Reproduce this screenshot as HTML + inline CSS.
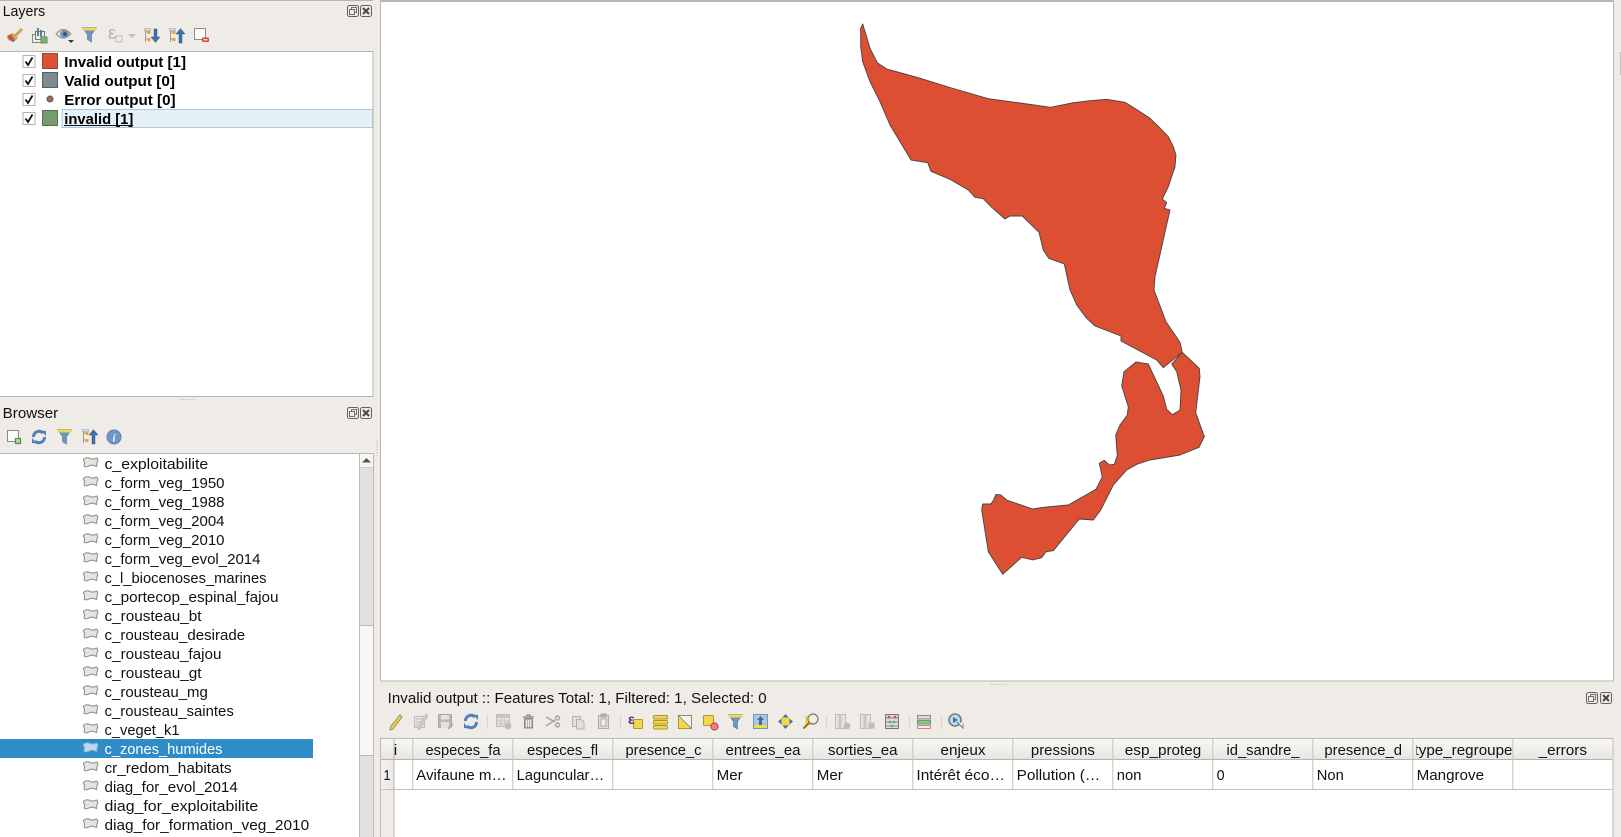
<!DOCTYPE html>
<html><head><meta charset="utf-8"><title>QGIS</title>
<style>
html,body{margin:0;padding:0;background:#efebe7;overflow:hidden}
svg{display:block}
text{font-family:"Liberation Sans",sans-serif;font-size:15px;fill:#111}
.b{font-weight:bold;font-size:14.5px;fill:#000}
.c{text-anchor:start}
</style></head><body>
<svg width="1621" height="837" viewBox="0 0 1621 837" xmlns="http://www.w3.org/2000/svg">
<defs>
<g id="poly"><path d="M1.5,2.5C3,0.5 6,0.5 8,1.5C10.5,2.5 13,2 14.5,1C16,2 16,4 15,5.5C14.5,7 15,8.5 14.5,9.5C12,8 10,7.8 8,8.5C6,9.5 4,10.5 2.5,9.5C1.5,8.5 3,6.5 2.5,5C2,4 1,3.5 1.5,2.5Z" fill="#e6e4e1" stroke="#929290" stroke-width="1.1"/></g>
<g id="funnel"><path d="M0.5,0.5H14.5L9.5,7.5V15L5.5,12.5V7.5Z" fill="#6f97bd" stroke="#5d7f9e" stroke-width=".7"/><rect x="0.5" y="0.5" width="14" height="3" fill="#f0d75a"/></g>
<g id="dock"><rect x=".5" y=".5" width="11" height="11" rx="2" fill="none" stroke="#66635f"/><rect x="4.5" y="2.5" width="5" height="5" fill="none" stroke="#66635f" stroke-width=".9"/><rect x="2.5" y="4.5" width="5" height="5" fill="#efebe7" stroke="#66635f" stroke-width=".9"/></g>
<g id="close"><rect x=".5" y=".5" width="11" height="11" rx="2" fill="none" stroke="#66635f"/><path d="M3,3L9,9M9,3L3,9" stroke="#4a4845" stroke-width="2"/></g>
<g id="cb"><rect x=".5" y=".5" width="12" height="12" fill="#fff" stroke="#b5b2ad"/><path d="M3,6.5L5.5,10L10,2.5" fill="none" stroke="#111" stroke-width="1.8"/></g>
<g id="tree"><path d="M1.5,1V14M1.5,4H6M1.5,11H6" stroke="#9a9a96" fill="none"/><rect x=".5" y=".5" width="6" height="2" fill="#ddd" stroke="#999" stroke-width=".5"/><rect x="3.5" y="3" width="3" height="3" fill="#f0a030"/><rect x="3.5" y="10" width="3" height="3" fill="#f0a030"/></g>
<clipPath id="cr"><rect x="1416.5" y="739" width="95" height="20"/></clipPath>
</defs>

<rect width="1621" height="837" fill="#efebe7"/>
<rect x="0" y="0" width="373" height="1" fill="#b9b5b0"/>

<!-- Layers dock -->
<text x="2.7" y="16" textLength="42.5" lengthAdjust="spacingAndGlyphs">Layers</text>
<use href="#dock" x="347" y="5"/><use href="#close" x="360" y="5"/>

<!-- layers toolbar -->
<g transform="translate(7,28)"><path d="M15,1L8,8" stroke="#c9a45c" stroke-width="3"/><path d="M0,8L6,5L11,10L6,14L1,12Z" fill="#d9a640"/><path d="M0,8L4,6L7,11L3,12Z" fill="#c8503c"/><path d="M3,12L7,10L8,13L6,14Z" fill="#7a6aa8"/></g>
<g transform="translate(32,28)" fill="none"><rect x=".5" y="6.5" width="9" height="8" stroke="#888" fill="#efebe7"/><rect x="3.5" y="3.5" width="9" height="8" stroke="#777" fill="#efebe7"/><path d="M6,0V8M9,2V9" stroke="#5d7f9e" stroke-width="2"/><rect x="9" y="9" width="6" height="6" fill="#7fb07a" stroke="#5c8f58"/></g>
<g transform="translate(56,28)"><path d="M0,6Q7,-3 15,6Q7,14 0,6Z" fill="#dcdcda" stroke="#8e8e8a"/><circle cx="8.5" cy="6" r="4.3" fill="#6f97bd"/><circle cx="9" cy="6" r="1.8" fill="#2f4f6d"/><path d="M12,12H18L15,15Z" fill="#333"/></g>
<use href="#funnel" x="82" y="27"/>
<g transform="translate(108,28)"><text x="0" y="11" style="font-size:18px;fill:#b2b2ae">ε</text><rect x="8" y="8" width="6" height="6" fill="none" stroke="#bdbdb9"/><path d="M20,6H28L24,10Z" fill="#c4c2be"/></g>
<g transform="translate(144,28)"><use href="#tree"/><path d="M10,1V9H7L11.5,14.5L16,9H13V1Z" fill="#3f73a8" stroke="#2f5a85" stroke-width=".5"/></g>
<g transform="translate(169,28)"><use href="#tree"/><path d="M10,15V6H7L11.5,.5L16,6H13V15Z" fill="#3f73a8" stroke="#2f5a85" stroke-width=".5"/></g>
<g transform="translate(194,28)"><rect x=".5" y=".5" width="11" height="11" fill="#fbfbfa" stroke="#8a8a86"/><rect x="8" y="9.5" width="7" height="4.5" rx="1" fill="#d8474a"/><rect x="9.5" y="11.2" width="4" height="1.2" fill="#fff"/></g>

<!-- layers tree -->
<rect x="-1" y="51.5" width="374" height="345" fill="#fff" stroke="#b9b5b0"/>
<use href="#cb" x="22.5" y="55"/><use href="#cb" x="22.5" y="74"/><use href="#cb" x="22.5" y="93"/><use href="#cb" x="22.5" y="112"/>
<rect x="42.5" y="53.5" width="15" height="15" fill="#df4f33" stroke="#7a5045"/>
<rect x="42.5" y="72.5" width="15" height="15" fill="#7e8c92" stroke="#555f63"/>
<circle cx="50" cy="99" r="3" fill="#996a52" stroke="#6a5a50"/>
<rect x="42.5" y="110.5" width="15" height="15" fill="#739c70" stroke="#55704f"/>
<rect x="62" y="109.5" width="310.5" height="18" fill="#e6f0f7" stroke="#a9c8df"/>
<text class="b" x="64.3" y="67" textLength="121.7" lengthAdjust="spacingAndGlyphs">Invalid output [1]</text>
<text class="b" x="64.3" y="86" textLength="110.7" lengthAdjust="spacingAndGlyphs">Valid output [0]</text>
<text class="b" x="64.3" y="105" textLength="111.3" lengthAdjust="spacingAndGlyphs">Error output [0]</text>
<text class="b" x="64.3" y="124" textLength="69" lengthAdjust="spacingAndGlyphs">invalid [1]</text>
<rect x="64" y="125" width="69" height="1" fill="#111"/>

<line x1="179" y1="399.5" x2="195" y2="399.5" stroke="#c4c0bb" stroke-dasharray="1.5 1.5"/>

<!-- Browser dock -->
<text x="2.7" y="418" textLength="55.5" lengthAdjust="spacingAndGlyphs">Browser</text>
<use href="#dock" x="347" y="407"/><use href="#close" x="360" y="407"/>
<g transform="translate(7,430)"><rect x=".5" y=".5" width="11" height="11" fill="#fbfbfa" stroke="#8a8a86"/><rect x="8.5" y="8.5" width="5" height="5" fill="#b5d6a8" stroke="#4f8f4a" stroke-width="1.2"/></g>
<g transform="translate(32,430)" fill="none" stroke="#4a82b8" stroke-width="3"><path d="M1.5,7A5.5,5.5 0 0 1 11,3"/><path d="M12.5,7A5.5,5.5 0 0 1 3,11"/><path d="M9,0.5L14,1V6Z" fill="#4a82b8" stroke="none"/><path d="M5,13.5L0,13V8Z" fill="#4a82b8" stroke="none"/></g>
<use href="#funnel" x="57" y="429"/>
<g transform="translate(82,429)"><use href="#tree"/><path d="M10,15V6H7L11.5,.5L16,6H13V15Z" fill="#3f73a8" stroke="#2f5a85" stroke-width=".5"/></g>
<circle cx="114" cy="437" r="7" fill="#6f97c6" stroke="#5c80ab"/><text x="112.5" y="441.5" style="font-size:11px;font-weight:bold;font-style:italic;fill:#fff;font-family:'Liberation Serif',serif">i</text>
<line x1="377" y1="440" x2="377" y2="457" stroke="#c4c0bb" stroke-dasharray="1.5 1.5"/>

<!-- browser list -->
<rect x="-1" y="453.5" width="374.5" height="390" fill="#fff" stroke="#b9b5b0"/>
<rect x="0" y="739" width="313" height="19" fill="#308cc6"/>
<g>
<use href="#poly" x="82" y="457"/><use href="#poly" x="82" y="476"/><use href="#poly" x="82" y="495"/><use href="#poly" x="82" y="514"/><use href="#poly" x="82" y="533"/><use href="#poly" x="82" y="552"/><use href="#poly" x="82" y="571"/><use href="#poly" x="82" y="590"/><use href="#poly" x="82" y="609"/><use href="#poly" x="82" y="628"/><use href="#poly" x="82" y="647"/><use href="#poly" x="82" y="666"/><use href="#poly" x="82" y="685"/><use href="#poly" x="82" y="704"/><use href="#poly" x="82" y="723"/>
<path transform="translate(82,742)" d="M1.5,2.5C3,0.5 6,0.5 8,1.5C10.5,2.5 13,2 14.5,1C16,2 16,4 15,5.5C14.5,7 15,8.5 14.5,9.5C12,8 10,7.8 8,8.5C6,9.5 4,10.5 2.5,9.5C1.5,8.5 3,6.5 2.5,5C2,4 1,3.5 1.5,2.5Z" fill="#bcd9ec" stroke="#8db8d6"/>
<use href="#poly" x="82" y="761"/><use href="#poly" x="82" y="780"/><use href="#poly" x="82" y="799"/><use href="#poly" x="82" y="818"/>
</g>
<g>
<text x="104.5" y="469" textLength="103.7" lengthAdjust="spacingAndGlyphs">c_exploitabilite</text>
<text x="104.5" y="488" textLength="120" lengthAdjust="spacingAndGlyphs">c_form_veg_1950</text>
<text x="104.5" y="507" textLength="120" lengthAdjust="spacingAndGlyphs">c_form_veg_1988</text>
<text x="104.5" y="526" textLength="120" lengthAdjust="spacingAndGlyphs">c_form_veg_2004</text>
<text x="104.5" y="545" textLength="120" lengthAdjust="spacingAndGlyphs">c_form_veg_2010</text>
<text x="104.5" y="564" textLength="156" lengthAdjust="spacingAndGlyphs">c_form_veg_evol_2014</text>
<text x="104.5" y="583" textLength="162" lengthAdjust="spacingAndGlyphs">c_l_biocenoses_marines</text>
<text x="104.5" y="602" textLength="174" lengthAdjust="spacingAndGlyphs">c_portecop_espinal_fajou</text>
<text x="104.5" y="621" textLength="97" lengthAdjust="spacingAndGlyphs">c_rousteau_bt</text>
<text x="104.5" y="640" textLength="140.6" lengthAdjust="spacingAndGlyphs">c_rousteau_desirade</text>
<text x="104.5" y="659" textLength="117" lengthAdjust="spacingAndGlyphs">c_rousteau_fajou</text>
<text x="104.5" y="678" textLength="97" lengthAdjust="spacingAndGlyphs">c_rousteau_gt</text>
<text x="104.5" y="697" textLength="103.4" lengthAdjust="spacingAndGlyphs">c_rousteau_mg</text>
<text x="104.5" y="716" textLength="129.3" lengthAdjust="spacingAndGlyphs">c_rousteau_saintes</text>
<text x="104.5" y="735" textLength="75" lengthAdjust="spacingAndGlyphs">c_veget_k1</text>
<text x="104.5" y="754" textLength="118" lengthAdjust="spacingAndGlyphs" style="fill:#fff">c_zones_humides</text>
<text x="104.5" y="773" textLength="127" lengthAdjust="spacingAndGlyphs">cr_redom_habitats</text>
<text x="104.5" y="792" textLength="133.3" lengthAdjust="spacingAndGlyphs">diag_for_evol_2014</text>
<text x="104.5" y="811" textLength="153.7" lengthAdjust="spacingAndGlyphs">diag_for_exploitabilite</text>
<text x="104.5" y="830" textLength="204.7" lengthAdjust="spacingAndGlyphs">diag_for_formation_veg_2010</text>
</g>
<!-- scrollbar -->
<rect x="359.5" y="453.5" width="14" height="390" fill="#e3e1de" stroke="#bdb9b4"/>
<rect x="360" y="454" width="13" height="13.5" fill="#f6f5f3"/>
<line x1="360" y1="467.5" x2="373" y2="467.5" stroke="#cfccc8"/>
<path d="M362,462.5H371L366.5,458Z" fill="#55534f"/>
<rect x="359.5" y="625.5" width="14" height="130" fill="#f8f7f6" stroke="#bdb9b4"/>

<!-- Map canvas -->
<rect x="380.5" y="1" width="1233" height="680" fill="#fff" stroke="#b9b5b0"/>
<rect x="380" y="0" width="1234" height="2" fill="#b9b5b0"/>
<rect x="1620" y="52" width="1" height="23" fill="#c4c1bc"/>
<path fill="#dd4f33" stroke="#444" stroke-width=".9" stroke-linejoin="round" d="M862.7,24L860.7,28.3L860.7,46.7L862.7,61.7L870,81.7L880,101.7L890,125L911,160L927.7,162.7L931,171.3L950,179.3L968.3,190L975,197.3L983.3,198.7L991.7,207.3L1005,219L1010,216L1022.3,216L1039,232.3L1043.3,250L1048.7,258.3L1064.3,264L1070,290L1076.7,305L1086.7,318.3L1095,326L1121,336L1121,341L1156.7,360L1163.3,367.7L1182.3,352.3L1180,342.3L1166,321.7L1154,290L1155,276.7L1170,210L1164.3,208.3L1166.7,202.7L1162.3,199L1168.3,186.7L1175,166.7L1176,155L1173.3,146.7L1168.3,136.7L1160,128L1150,118.3L1137,109.7L1125,102.3L1106.7,99.3L1090,100.7L1073.3,102.7L1050.7,107.3L1020,103L988.3,98.7L950,87.5L918.3,77.7L886.7,69L877.3,62.7L870,48.3Z"/>
<path fill="#dd4f33" stroke="#444" stroke-width=".9" stroke-linejoin="round" d="M1182.3,352.3L1199.3,368.3L1200,376.7L1195.7,412.7L1204.3,436.7L1199,447.3L1180,455L1150,460L1136.7,464.3L1126.7,470L1113.3,485L1100.7,510L1093.3,520L1079.3,519L1053.3,550.7L1046,551.7L1041.7,557.7L1032.7,560L1021.7,557.3L1002.7,574.3L988.3,551.7L981.7,510L982.7,504L990.7,504L993.3,500.7L996,494.3L1000.7,495L1006.7,500L1032.7,509L1043.3,507.3L1068.3,505L1096,489.3L1102.3,476.7L1099.3,463.3L1104.3,460.3L1109.3,465L1114.3,464.3L1117.3,455.7L1115.7,435L1120,425L1127.3,415L1128.3,406.7L1121.7,386L1124,371.7L1136,362L1148.3,364L1163.3,396L1166.7,409.3L1172.3,414.7L1180,410L1181,390L1176.7,371.7L1171.7,364Z"/>

<line x1="990" y1="684.5" x2="1006" y2="684.5" stroke="#c4c0bb" stroke-dasharray="1.5 1.5"/>

<!-- Attribute table -->
<text x="387.7" y="703" textLength="379" lengthAdjust="spacingAndGlyphs">Invalid output :: Features Total: 1, Filtered: 1, Selected: 0</text>
<use href="#dock" x="1586" y="692"/><use href="#close" x="1600" y="692"/>

<!-- attr toolbar -->
<g transform="translate(390,714)"><path d="M10,1L12,3L3,15L0,16L1,12Z" fill="#e8cf4e" stroke="#8d8350" stroke-width=".8"/></g>
<g transform="translate(414,714)" opacity=".55"><rect x=".5" y="2.5" width="10" height="11" fill="#ddd" stroke="#999"/><path d="M2,5H9M2,8H9M2,11H9" stroke="#999"/><path d="M12,0L14,2L6,15L4,15.5L4.5,13Z" fill="#bbb" stroke="#888" stroke-width=".7"/></g>
<g transform="translate(438,714)" opacity=".6"><rect x=".5" y=".5" width="13" height="13" rx="1" fill="#999" stroke="#777"/><rect x="3" y="1" width="8" height="4.5" fill="#ddd"/><rect x="3" y="8" width="8" height="6" fill="#ddd"/><path d="M10,15L15,10" stroke="#888" stroke-width="2"/></g>
<g transform="translate(464,714)" fill="none" stroke="#4a82b8" stroke-width="3"><path d="M1.5,7A5.5,5.5 0 0 1 11,3"/><path d="M12.5,8A5.5,5.5 0 0 1 3,12"/><path d="M9,0.5L14,1V6Z" fill="#4a82b8" stroke="none"/><path d="M5,14.5L0,14V9Z" fill="#4a82b8" stroke="none"/></g>
<rect x="487" y="715" width="1" height="14" fill="#d8d5d0"/>
<g transform="translate(496,714)" opacity=".55"><rect x=".5" y=".5" width="13" height="12" fill="#ddd" stroke="#999"/><rect x="1" y="1" width="12" height="3" fill="#aaa"/><path d="M1,7H13M1,10H13M5,4V13M9,4V13" stroke="#aaa"/><circle cx="12" cy="12" r="3.4" fill="#999"/></g>
<g transform="translate(523,714)" fill="none" stroke="#8a8883"><path d="M0,3H11M4,3V1H7V3" stroke-width="1.2"/><path d="M1.5,4.5H9.5V14H1.5Z" fill="#b5b2ad"/><path d="M3.5,6V13M5.5,6V13M7.5,6V13" stroke="#eee"/></g>
<g transform="translate(546,715)" fill="none" stroke="#a5a29d" stroke-width="1.4"><path d="M0,2L9,7M0,11L9,5" /><circle cx="11.5" cy="3" r="2"/><circle cx="11.5" cy="10" r="2"/></g>
<g transform="translate(572,714)" fill="#e2e0dd" stroke="#b5b2ad"><rect x=".5" y="2.5" width="8" height="10"/><path d="M4.5,5.5H9L12,8V15H4.5Z"/></g>
<g transform="translate(598,714)" fill="#dcdad6" stroke="#b0ada8"><rect x=".5" y="1.5" width="10" height="13"/><rect x="3" y="0" width="5" height="3" fill="#b0ada8"/><rect x="3" y="5" width="5" height="7" fill="#efefed"/></g>
<rect x="620" y="715" width="1" height="14" fill="#d8d5d0"/>
<g transform="translate(628,713)"><rect x="5.5" y="6.5" width="9" height="9" rx="1" fill="#f2d64b" stroke="#b0962a"/><text x="0" y="11" style="font-size:14px;font-weight:bold;fill:#5f2f72">ε</text></g>
<g transform="translate(653,715)" fill="#f2d64b" stroke="#b0962a"><rect x=".5" y=".5" width="14" height="3.5" rx="1"/><rect x=".5" y="5.5" width="14" height="3.5" rx="1"/><rect x=".5" y="10.5" width="14" height="3.5" rx="1"/></g>
<g transform="translate(678,715)"><rect x=".5" y=".5" width="13" height="13" fill="#f2d64b" stroke="#b0962a"/><path d="M.5,.5L13.5,13.5V.5Z" fill="#f4f3f0" stroke="#777" stroke-width=".7"/></g>
<g transform="translate(703,715)"><rect x=".5" y=".5" width="10" height="10" rx="1" fill="#f2d64b" stroke="#b0962a"/><circle cx="11.5" cy="11.5" r="3.6" fill="#e8808a" stroke="#c23b45"/></g>
<use href="#funnel" x="728" y="714"/>
<g transform="translate(753,714)"><rect x=".5" y=".5" width="14" height="14" fill="#a9c7e0" stroke="#6f97bd"/><rect x="1" y="11" width="13" height="3" fill="#f2d64b"/><path d="M7.5,2L11,6H9V11H6V6H4Z" fill="#3c6f9f"/></g>
<g transform="translate(778,714)"><rect x="3" y="3" width="9" height="9" fill="#f2d64b"/><path d="M7.5,0L10.5,3.5H4.5ZM7.5,15L4.5,11.5H10.5ZM0,7.5L3.5,4.5V10.5ZM15,7.5L11.5,10.5V4.5Z" fill="#3f73a8"/></g>
<g transform="translate(803,713)"><rect x="2" y="3" width="9" height="9" fill="#f2d64b"/><circle cx="10" cy="6" r="5" fill="#eee" fill-opacity=".85" stroke="#777" stroke-width="1.2"/><path d="M6,10L.5,15.5" stroke="#8a7420" stroke-width="2"/></g>
<rect x="826" y="715" width="1" height="14" fill="#d8d5d0"/>
<g transform="translate(835,714)" opacity=".55"><rect x=".5" y=".5" width="10" height="14" fill="#ddd" stroke="#999"/><rect x="3.5" y="1" width="3" height="13" fill="#aaa"/><circle cx="12" cy="12" r="3.4" fill="#999"/></g>
<g transform="translate(860,714)" opacity=".55"><rect x=".5" y=".5" width="10" height="14" fill="#ddd" stroke="#999"/><rect x="3.5" y="1" width="3" height="13" fill="#aaa"/><rect x="8.5" y="8.5" width="6" height="6" fill="#999"/></g>
<g transform="translate(885,714)"><rect x=".5" y=".5" width="13" height="14" fill="#ddd" stroke="#777"/><path d="M1,4H13M1,8H13M1,12H13" stroke="#888"/><circle cx="4" cy="3" r="1.4" fill="#c9544c"/><circle cx="10" cy="3" r="1.4" fill="#c9544c"/><circle cx="5" cy="8" r="1.4" fill="#72a878"/><circle cx="9" cy="8" r="1.4" fill="#6f97bd"/><circle cx="7" cy="12" r="1.4" fill="#72a878"/></g>
<rect x="909" y="715" width="1" height="14" fill="#d8d5d0"/>
<g transform="translate(917,715)"><rect x=".5" y=".5" width="13" height="3.5" fill="#ddd" stroke="#888"/><rect x=".5" y="5.5" width="13" height="3.5" fill="#8fc48d" stroke="#6a9c68"/><rect x=".5" y="10.5" width="13" height="3" fill="#eee" stroke="#d9808a"/></g>
<rect x="941" y="715" width="1" height="14" fill="#d8d5d0"/>
<g transform="translate(948,713)"><circle cx="7" cy="7" r="6" fill="#c7d8e6" stroke="#6d7d8c" stroke-width="1.6"/><path d="M5,4L10,7L5,10Z" fill="#3f73a8"/><path d="M9,9L15,15V10.5" fill="#fff" stroke="#777" stroke-width="1"/></g>

<!-- table -->
<rect x="380.5" y="738.5" width="1232.5" height="110" fill="#fff" stroke="#bdb9b4"/>
<rect x="381" y="739" width="13" height="98" fill="#efebe7"/>
<rect x="394" y="790" width="1218" height="47" fill="#fff"/>
<linearGradient id="h" x1="0" y1="0" x2="0" y2="1"><stop offset="0" stop-color="#f8f7f5"/><stop offset="1" stop-color="#e9e6e2"/></linearGradient>
<rect x="381" y="739" width="1231" height="20" fill="url(#h)"/>
<linearGradient id="v" x1="0" y1="0" x2="1" y2="0"><stop offset="0" stop-color="#f4f2f0"/><stop offset="1" stop-color="#e9e6e2"/></linearGradient>
<rect x="381" y="760" width="13" height="29" fill="url(#v)"/>
<rect x="381" y="759" width="1231" height="1" fill="#b5b1ac"/>
<rect x="381" y="789" width="1231" height="1" fill="#c4c1bd"/>
<rect x="393.5" y="739" width="1" height="98" fill="#b9b5b0"/>
<g fill="#c4c1bd">
<rect x="412.3" y="739" width="1" height="51"/><rect x="512.3" y="739" width="1" height="51"/><rect x="612.3" y="739" width="1" height="51"/><rect x="712.3" y="739" width="1" height="51"/><rect x="812.3" y="739" width="1" height="51"/><rect x="912.3" y="739" width="1" height="51"/><rect x="1012.3" y="739" width="1" height="51"/><rect x="1112.3" y="739" width="1" height="51"/><rect x="1212.3" y="739" width="1" height="51"/><rect x="1312.3" y="739" width="1" height="51"/><rect x="1412.3" y="739" width="1" height="51"/><rect x="1512.3" y="739" width="1" height="51"/>
</g>
<g>
<text x="393.8" y="755" textLength="3.5" lengthAdjust="spacingAndGlyphs">i</text>
<text x="425.5" y="755" textLength="75" lengthAdjust="spacingAndGlyphs">especes_fa</text>
<text x="527" y="755" textLength="71" lengthAdjust="spacingAndGlyphs">especes_fl</text>
<text x="625.5" y="755" textLength="76" lengthAdjust="spacingAndGlyphs">presence_c</text>
<text x="725.5" y="755" textLength="75" lengthAdjust="spacingAndGlyphs">entrees_ea</text>
<text x="828" y="755" textLength="69.5" lengthAdjust="spacingAndGlyphs">sorties_ea</text>
<text x="940.5" y="755" textLength="45" lengthAdjust="spacingAndGlyphs">enjeux</text>
<text x="1030.9" y="755" textLength="64" lengthAdjust="spacingAndGlyphs">pressions</text>
<text x="1124.8" y="755" textLength="76.5" lengthAdjust="spacingAndGlyphs">esp_proteg</text>
<text x="1226.5" y="755" textLength="73" lengthAdjust="spacingAndGlyphs">id_sandre_</text>
<text x="1324.4" y="755" textLength="77.6" lengthAdjust="spacingAndGlyphs">presence_d</text>
<text x="1414.5" y="755" textLength="98" lengthAdjust="spacingAndGlyphs" clip-path="url(#cr)">type_regroupe</text>
<text x="1538.6" y="755" textLength="48.4" lengthAdjust="spacingAndGlyphs">_errors</text>
<text x="383.5" y="780" textLength="7" lengthAdjust="spacingAndGlyphs">1</text>
<text x="416.2" y="780" textLength="90.4" lengthAdjust="spacingAndGlyphs">Avifaune m…</text>
<text x="516.6" y="780" textLength="87.6" lengthAdjust="spacingAndGlyphs">Laguncular…</text>
<text x="716.7" y="780" textLength="26" lengthAdjust="spacingAndGlyphs">Mer</text>
<text x="816.8" y="780" textLength="26" lengthAdjust="spacingAndGlyphs">Mer</text>
<text x="916.4" y="780" textLength="88.6" lengthAdjust="spacingAndGlyphs">Intérêt éco…</text>
<text x="1016.6" y="780" textLength="83.6" lengthAdjust="spacingAndGlyphs">Pollution (…</text>
<text x="1116.8" y="780" textLength="24.6" lengthAdjust="spacingAndGlyphs">non</text>
<text x="1216.6" y="780" textLength="8" lengthAdjust="spacingAndGlyphs">0</text>
<text x="1316.8" y="780" textLength="27" lengthAdjust="spacingAndGlyphs">Non</text>
<text x="1416.6" y="780" textLength="67.4" lengthAdjust="spacingAndGlyphs">Mangrove</text>
</g>
</svg>
</body></html>
